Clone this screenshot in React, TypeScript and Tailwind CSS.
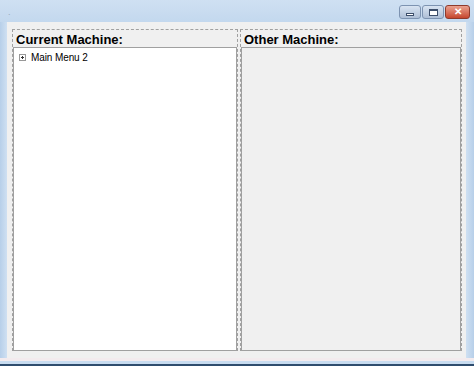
import React from "react";

function Panel({ title, children, white }: { title: string; children?: React.ReactNode; white?: boolean }) {
  return (
    <div className="flex flex-col border-t border-x border-dashed border-[#a0a0a0] h-full">
      <div className="h-[17px] flex items-end pl-[3px] text-[13px] font-bold text-black leading-[15px] bg-[#f0f0f0]" style={{ fontFamily: '"Liberation Sans", Arial, sans-serif' }}>
        {title}
      </div>
      <div className={`flex-1 border border-[#a0a0a0] ${white ? "bg-white" : "bg-[#f0f0f0]"}`}>{children}</div>
    </div>
  );
}

export default function App() {
  return (
    <div className="w-[474px] h-[366px] flex flex-col bg-[#bfd5ec] overflow-hidden" style={{ fontFamily: '"Liberation Sans", Arial, sans-serif' }}>
      <div className="h-[22px] flex items-start justify-between bg-gradient-to-b from-[#cfe0f2] to-[#c3d8ee]">
        <div className="pl-[8px] pt-[6px] text-[9px] text-[#9ab]">.</div>
        <div className="flex mt-[5px] mr-[4px] gap-[1px]">
          <div className="w-[22px] h-[14px] rounded-[3px] border border-[#7d93b1] bg-gradient-to-b from-[#d8e4f2] to-[#aebfd6] flex items-center justify-center">
            <div className="w-[8px] h-[3px] border border-[#3d4f6b] bg-white mt-[4px]" />
          </div>
          <div className="w-[22px] h-[14px] rounded-[3px] border border-[#7d93b1] bg-gradient-to-b from-[#d8e4f2] to-[#aebfd6] flex items-center justify-center">
            <div className="w-[9px] h-[7px] border border-[#3d4f6b] border-t-2 bg-white" />
          </div>
          <div className="w-[25px] h-[14px] rounded-[3px] border border-[#8e3a2c] bg-gradient-to-b from-[#e9a08f] to-[#c5452c] flex items-center justify-center">
            <span className="text-white text-[10px] font-bold leading-none">✕</span>
          </div>
        </div>
      </div>
      <div className="flex flex-1">
        <div className="w-[7px] bg-gradient-to-r from-[#b7cfe9] to-[#cfe0f2]" />
        <div className="flex-1 bg-[#f0f0f0] flex gap-[2px] pl-[5px] pr-[4px] pt-[7px] pb-[7px]">
          <div className="w-[226px]">
            <Panel title="Current Machine:" white>
              <div className="flex items-center pl-[5px] pt-[3px] gap-[5px]">
                <div className="w-[7px] h-[7px] border border-[#989898] flex items-center justify-center relative bg-white">
                  <div className="absolute w-[3px] h-[1px] bg-[#333]" />
                  <div className="absolute w-[1px] h-[3px] bg-[#333]" />
                </div>
                <span className="text-[10px] tracking-[-0.1px] text-black leading-[13px]">Main Menu 2</span>
              </div>
            </Panel>
          </div>
          <div className="flex-1">
            <Panel title="Other Machine:" />
          </div>
        </div>
        <div className="w-[8px] bg-gradient-to-r from-[#cfe0f2] to-[#b7cfe9]" />
      </div>
      <div className="h-[8px] flex flex-col">
        <div className="h-[3px] bg-[#f3ebee]" />
        <div className="h-[3px] bg-[#c8dcf0]" />
        <div className="h-[2px] bg-[#2f4d6e]" />
      </div>
    </div>
  );
}
